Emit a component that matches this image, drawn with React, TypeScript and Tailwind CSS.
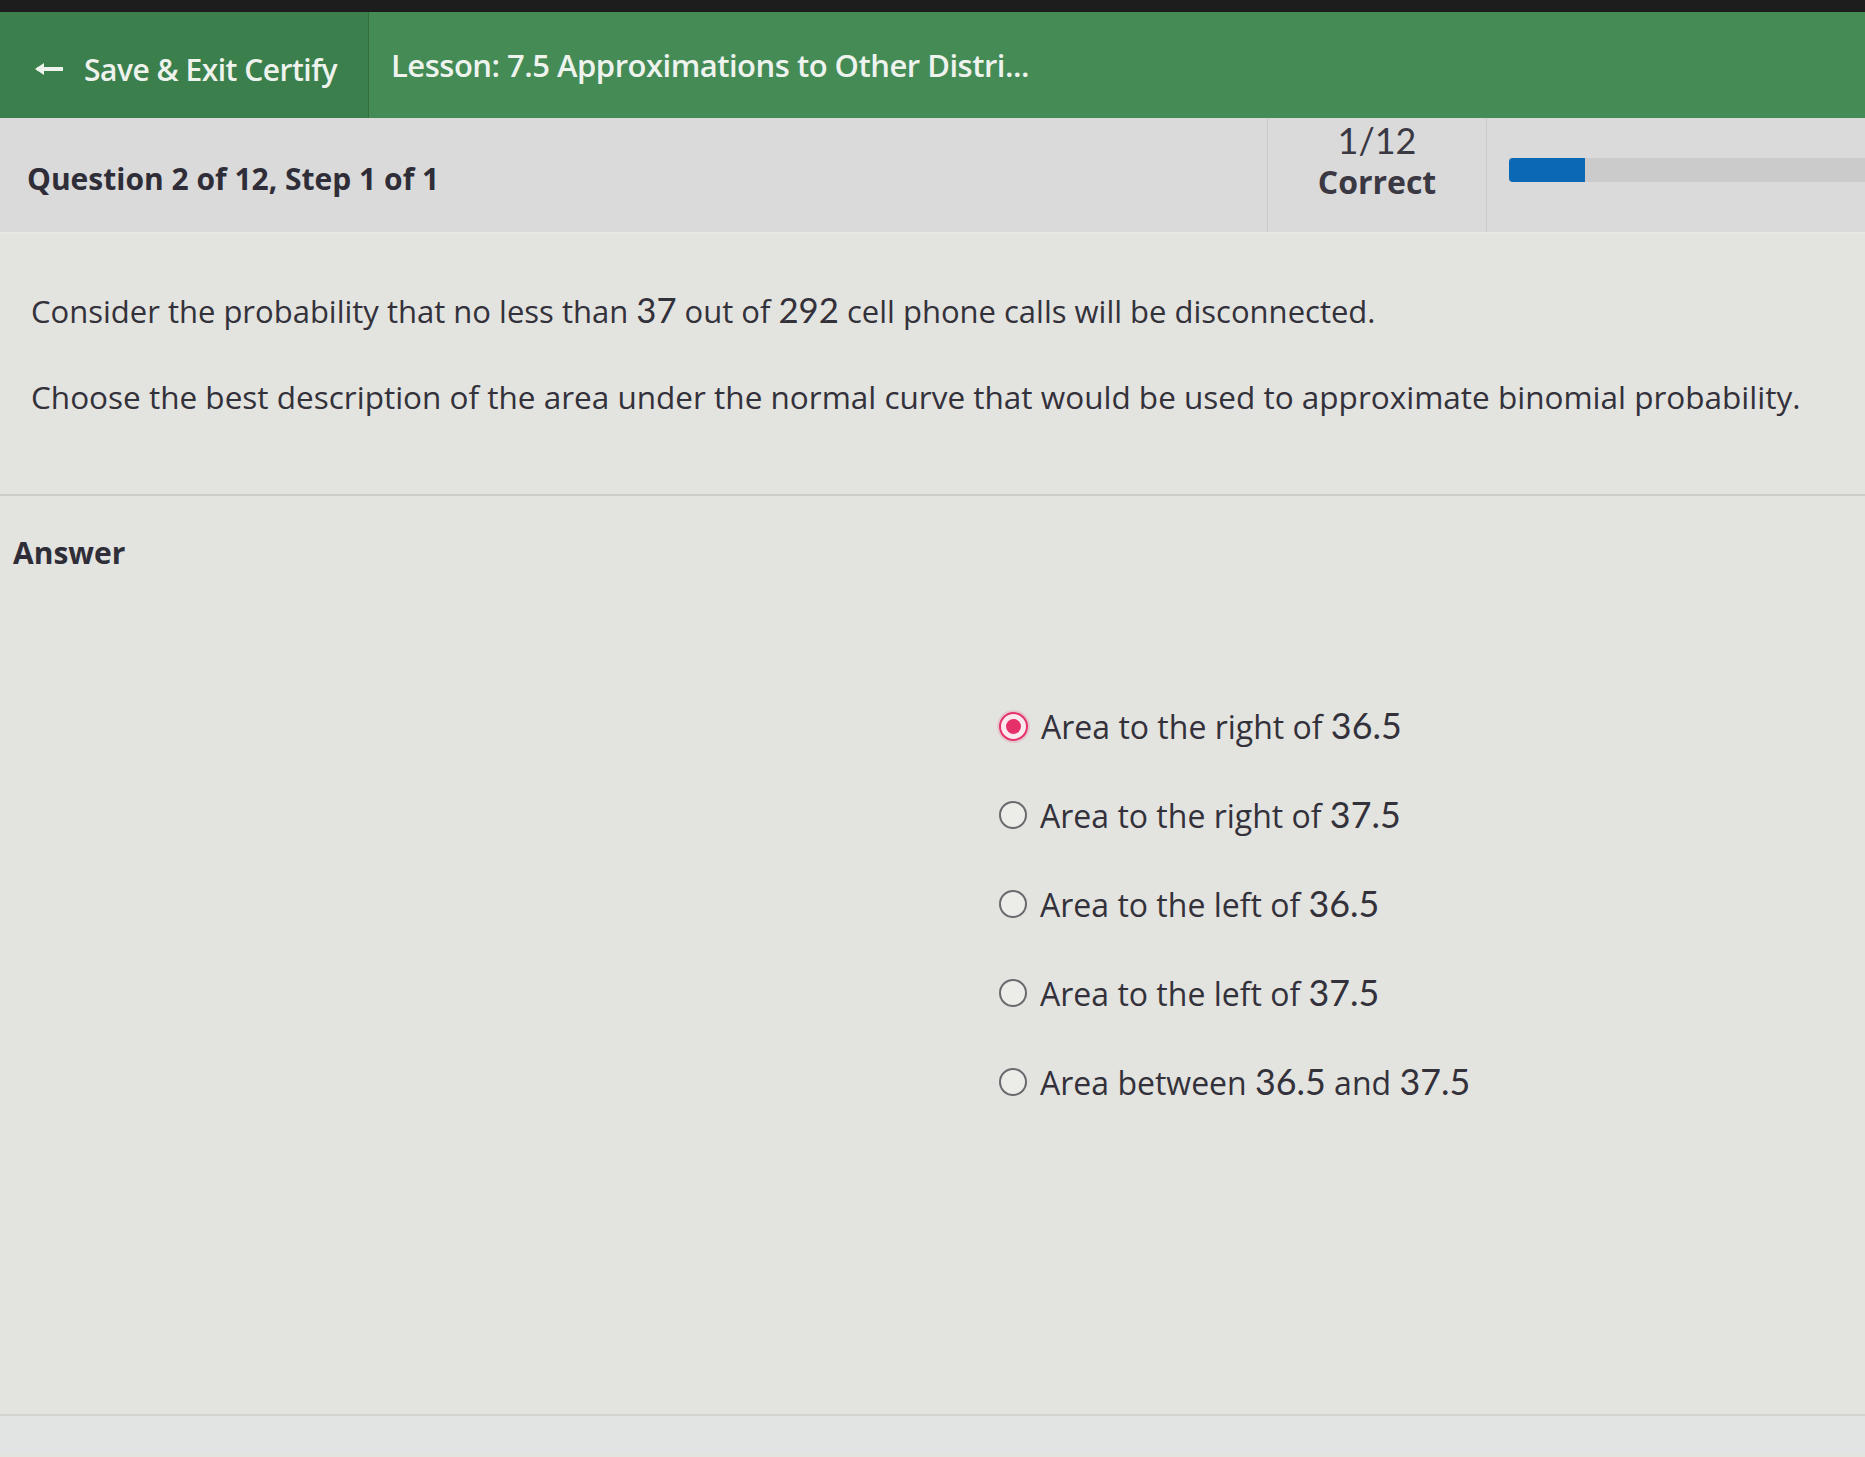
import React from 'react'

const options = [
  { pre: 'Area to the right of ', nums: ['36.5'], selected: true },
  { pre: 'Area to the right of ', nums: ['37.5'], selected: false },
  { pre: 'Area to the left of ', nums: ['36.5'], selected: false },
  { pre: 'Area to the left of ', nums: ['37.5'], selected: false },
  { pre: 'Area between ', nums: ['36.5', '37.5'], selected: false, mid: ' and ' }
]

function Num({ children }: { children: React.ReactNode }) {
  return <span className="font-['Lato',sans-serif] text-[1.12em]">{children}</span>
}

function Radio({ checked }: { checked: boolean }) {
  if (checked) {
    return (
      <span className="flex h-[29px] w-[29px] shrink-0 items-center justify-center rounded-full border-[2.5px] border-[#e5336c] bg-[#fbe9ef] shadow-[0_0_0_2px_rgba(229,51,108,0.15)]">
        <span className="h-[15px] w-[15px] rounded-full bg-[#e5306a]" />
      </span>
    )
  }
  return <span className="h-[28px] w-[28px] shrink-0 rounded-full border-2 border-[#6b696e] bg-[#ecece9]" />
}

export default function App() {
  return (
    <div className="min-h-[1457px] bg-[#e3e3e0] font-['Open_Sans',sans-serif] text-[#33313a]">
      <div className="h-[12px] bg-[#1c1d1c]" />

      <header className="flex h-[106px] bg-[#448b56] text-[#eef3ee]">
        <div className="flex w-[369px] items-center gap-[19px] border-r border-[#336f42] bg-[#3b7f4c] pl-[35px] pt-[8px]">
          <svg width="30" height="14" viewBox="0 0 30 14" aria-hidden>
            <path d="M2 7h26" stroke="currentColor" strokeWidth="4" />
            <path d="M0 7l9-6v12z" fill="currentColor" />
          </svg>
          <span className="text-[30px] font-semibold tracking-[-0.5px]">Save &amp; Exit Certify</span>
        </div>
        <div className="flex items-center pl-[22px] text-[31px] font-semibold tracking-[-0.5px]">
          Lesson: 7.5 Approximations to Other Distri...
        </div>
      </header>

      <div className="flex h-[116px] border-b-2 border-[#e8e8e6] bg-[#dadada]">
        <div className="flex flex-1 items-center pl-[27px] pt-[6px] text-[30px] font-bold text-[#2f2e38]">
          Question 2 of 12, Step 1 of 1
        </div>
        <div className="flex w-[220px] flex-col items-center justify-center border-x border-[#c9c9c9] pb-[28px] text-[32px] leading-[42px] text-[#3a3842]">
          <span className="font-['Lato',sans-serif] text-[36px]">1/12</span>
          <span className="font-bold">Correct</span>
        </div>
        <div className="flex w-[378px] items-center pb-[10px] pl-[22px]">
          <div className="flex h-[24px] flex-1 bg-[#cbcbcb]">
            <div className="h-full w-[76px] rounded-l-[4px] bg-[#0a68b5]" />
          </div>
        </div>
      </div>

      <section className="border-b-2 border-[#cbcbc8] pb-[76px] pl-[31px] pt-[55px] text-[31px] leading-[42px]">
        <p>
          Consider the probability that no less than <Num>37</Num> out of <Num>292</Num> cell phone calls will be
          disconnected.
        </p>
        <p className="mt-[44px] text-[31.5px]">
          Choose the best description of the area under the normal curve that would be used to approximate binomial
          probability.
        </p>
      </section>

      <div className="pl-[13px] pt-[37px] text-[30px] font-bold leading-[40px] text-[#2f2e38]">Answer</div>

      <div className="flex flex-col gap-[49px] pl-[999px] pt-[133px]">
        {options.map((o, i) => (
          <label key={i} className="flex h-[40px] items-center gap-[13px] text-[32px]">
            <Radio checked={o.selected} />
            <span className="whitespace-nowrap">
              {o.pre}
              <Num>{o.nums[0]}</Num>
              {o.mid}
              {o.nums[1] && <Num>{o.nums[1]}</Num>}
            </span>
          </label>
        ))}
      </div>

      <div className="mt-[312px] h-[40px] border-t-2 border-[#d3d3d0] bg-[#e2e3e3]" />
    </div>
  )
}
